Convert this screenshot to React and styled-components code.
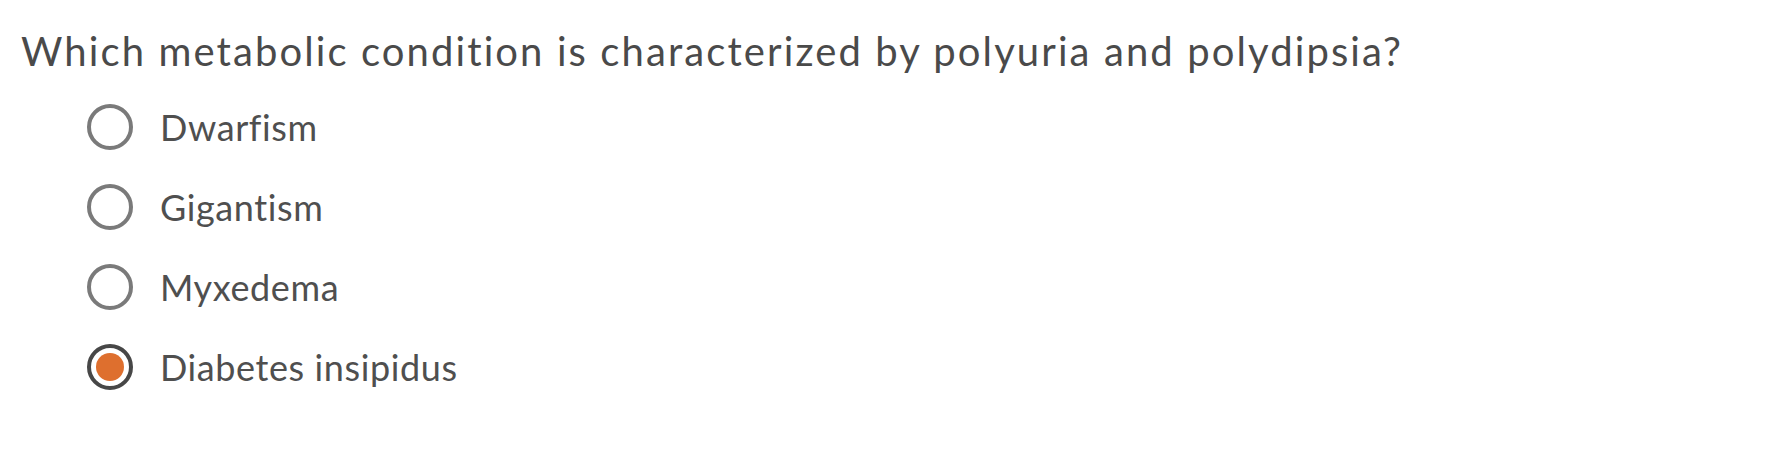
import React, { useState } from 'react';
import styled, { createGlobalStyle } from 'styled-components';

const GlobalStyle = createGlobalStyle`
  html, body {
    margin: 0;
    padding: 0;
    background: #ffffff;
  }
  body {
    font-family: Lato, "Open Sans", sans-serif;
    color: #4b4b4b;
    font-variant-ligatures: no-common-ligatures;
  }
`;

const Question = styled.div`
  padding: 27px 0 0 21px;
`;

const Title = styled.h1`
  margin: 0;
  font-size: 40px;
  line-height: 48px;
  font-weight: 400;
  letter-spacing: 2.1px;
  color: #4a4a4a;
`;

const Options = styled.div`
  display: flex;
  flex-direction: column;
  gap: 34px;
  padding: 29px 0 0 66px;
`;

const Option = styled.label`
  display: flex;
  align-items: center;
  gap: 27px;
  cursor: pointer;
  font-size: 36px;
  line-height: 46px;
  letter-spacing: 0.6px;
  color: #4f4f4f;
`;

const Radio = styled.span`
  box-sizing: border-box;
  width: 46px;
  height: 46px;
  flex: 0 0 46px;
  border-radius: 50%;
  border: 4px solid ${p => (p.$checked ? '#474747' : '#7a7a7a')};
  display: flex;
  align-items: center;
  justify-content: center;

  &::after {
    content: '';
    width: 28px;
    height: 28px;
    border-radius: 50%;
    background: #de6f2e;
    display: ${p => (p.$checked ? 'block' : 'none')};
  }
`;

const HiddenInput = styled.input`
  position: absolute;
  opacity: 0;
  width: 0;
  height: 0;
`;

const answers = ['Dwarfism', 'Gigantism', 'Myxedema', 'Diabetes insipidus'];

export default function App() {
  const [picked, setPicked] = useState('Diabetes insipidus');

  return (
    <>
      <GlobalStyle />
      <Question role="radiogroup">
        <Title>Which metabolic condition is characterized by polyuria and polydipsia?</Title>
        <Options>
          {answers.map(a => (
            <Option key={a}>
              <HiddenInput
                type="radio"
                name="q1"
                checked={picked === a}
                onChange={() => setPicked(a)}
              />
              <Radio $checked={picked === a} />
              {a}
            </Option>
          ))}
        </Options>
      </Question>
    </>
  );
}
